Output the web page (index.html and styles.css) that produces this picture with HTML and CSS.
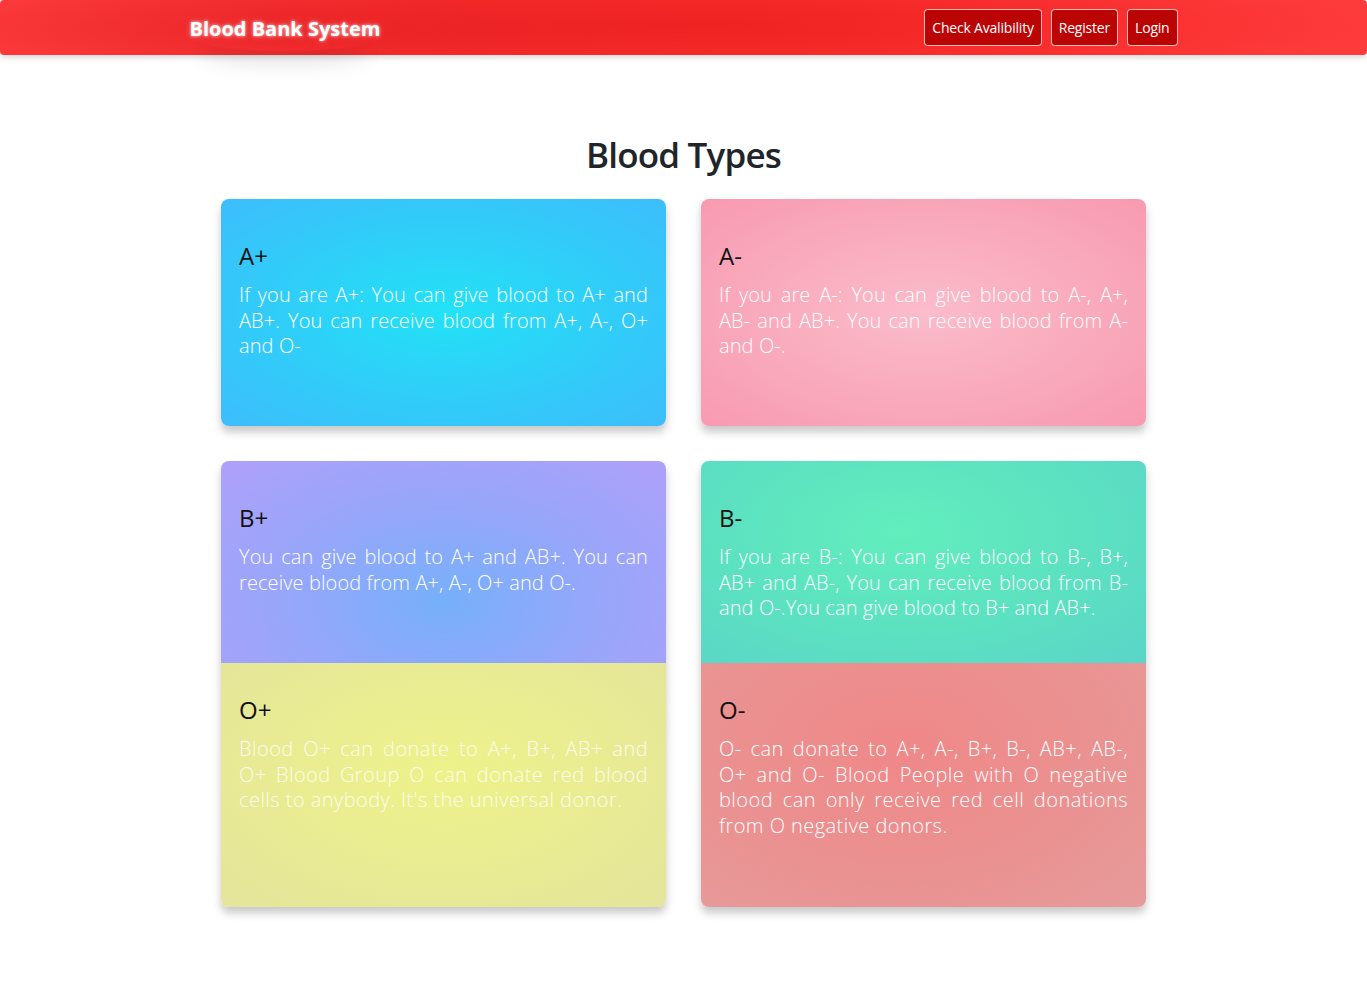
FILE: index.html
```html
<!DOCTYPE html>
<html lang="en">
<head>
<meta charset="utf-8">
<title>Blood Bank System</title>
<link rel="stylesheet" href="styles.css">
</head>
<body>
<nav class="navbar">
  <div class="nav-inner">
    <a class="brand" href="#">Blood Bank System</a>
    <div class="nav-actions">
      <a class="btn" href="#">Check Avalibility</a>
      <a class="btn" href="#">Register</a>
      <a class="btn" href="#">Login</a>
    </div>
  </div>
</nav>

<main class="content">
  <h1 class="page-title">Blood Types</h1>
  <div class="grid">
    <div class="card card-apos row1 rounded">
      <h3 class="type">A+</h3>
      <p class="desc">If you are A+: You can give blood to A+ and AB+. You can receive blood from A+, A-, O+ and O-</p>
    </div>
    <div class="card card-aneg row1 rounded">
      <h3 class="type">A-</h3>
      <p class="desc">If you are A-: You can give blood to A-, A+, AB- and AB+. You can receive blood from A- and O-.</p>
    </div>
    <div class="stack">
      <div class="card card-bpos row2 top">
        <h3 class="type">B+</h3>
        <p class="desc">You can give blood to A+ and AB+. You can receive blood from A+, A-, O+ and O-.</p>
      </div>
      <div class="card card-opos row3 bottom">
        <h3 class="type">O+</h3>
        <p class="desc faint">Blood O+ can donate to A+, B+, AB+ and O+ Blood Group O can donate red blood cells to anybody. It's the universal donor.</p>
      </div>
    </div>
    <div class="stack">
      <div class="card card-bneg row2 top">
        <h3 class="type">B-</h3>
        <p class="desc">If you are B-: You can give blood to B-, B+, AB+ and AB-, You can receive blood from B- and O-.You can give blood to B+ and AB+.</p>
      </div>
      <div class="card card-oneg row3 bottom">
        <h3 class="type">O-</h3>
        <p class="desc">O- can donate to A+, A-, B+, B-, AB+, AB-, O+ and O- Blood People with O negative blood can only receive red cell donations from O negative donors.</p>
      </div>
    </div>
  </div>
</main>
</body>
</html>
```

FILE: styles.css
```css
* { box-sizing: border-box; }

html, body {
  margin: 0;
  padding: 0;
  background: #ffffff;
  font-family: "Open Sans", "Noto Sans", "Liberation Sans", sans-serif;
  color: #212529;
}

.navbar {
  height: 55px;
  border-radius: 4px;
  background:
    radial-gradient(ellipse 420px 60px at 290px 30px, rgba(200, 20, 30, 0.3), rgba(200, 20, 30, 0) 100%),
    radial-gradient(ellipse 700px 70px at 680px 25px, #ef2222 0%, #f72a2a 45%, #fe3b3b 100%);
  box-shadow: 0 2px 6px rgba(0, 0, 0, 0.18);
  position: relative;
}

.nav-inner {
  width: 1000px;
  margin: 0 auto;
  height: 100%;
  display: flex;
  align-items: center;
  justify-content: space-between;
  padding: 0 6px 0 6px;
}

.brand {
  position: relative;
  font-weight: 700;
  font-size: 20px;
  color: #ffffff;
  text-decoration: none;
  letter-spacing: 0;
  text-shadow: 0 0 3px rgba(255, 255, 255, 0.7), 0 0 6px rgba(255, 255, 255, 0.35);
  margin-top: 1px;
}

.brand::after {
  content: "";
  position: absolute;
  left: 10px;
  right: 10px;
  top: 14px;
  height: 22px;
  border-radius: 50%;
  box-shadow: 0 16px 18px rgba(0, 0, 0, 0.08);
  pointer-events: none;
}

.nav-actions {
  display: flex;
  gap: 9px;
  align-items: center;
}

.btn {
  display: inline-flex;
  align-items: center;
  height: 37px;
  padding: 0 7px;
  background: #bb0505;
  color: #ffffff;
  font-size: 14px;
  text-decoration: none;
  border: 1px solid rgba(255, 220, 220, 0.85);
  border-radius: 4px;
  letter-spacing: -0.2px;
}

.content {
  width: 925px;
  margin: 0 auto;
  padding-top: 77px;
  padding-bottom: 60px;
}

.page-title {
  margin: 0 0 21px;
  text-align: center;
  font-size: 35px;
  font-weight: 600;
  line-height: 46px;
  color: #212529;
  letter-spacing: -0.8px;
}

.grid {
  display: grid;
  grid-template-columns: 445px 445px;
  column-gap: 35px;
  row-gap: 35px;
}

.stack {
  display: flex;
  flex-direction: column;
  border-radius: 8px;
  box-shadow: 0 6px 8px rgba(0, 0, 0, 0.22);
}

.card {
  padding: 42px 18px 0;
}

.rounded {
  border-radius: 8px;
  box-shadow: 0 6px 8px rgba(0, 0, 0, 0.22);
}

.top { border-radius: 8px 8px 0 0; }
.bottom { border-radius: 0 0 8px 8px; }

.row1 { height: 227px; }
.row2 { height: 202px; }
.row3 { height: 244px; padding-top: 32px; }

.type {
  margin: 0 0 11px;
  font-size: 24px;
  font-weight: 400;
  line-height: 30px;
  color: #111111;
}

.desc {
  margin: 0;
  font-size: 20px;
  font-weight: 300;
  line-height: 25.6px;
  color: #ffffff;
  text-align: justify;
  letter-spacing: 0.1px;
}

.row3 .desc { letter-spacing: 0.45px; }

.desc.faint { color: rgba(255, 255, 255, 0.85); }

.card-apos {
  background: radial-gradient(ellipse at 50% 50%, #22e2f6 0%, #2ed0f8 45%, #3dbdfc 100%);
}
.card-aneg {
  background: radial-gradient(ellipse at 50% 50%, #fbbccb 0%, #f9abbd 50%, #f89ab1 100%);
}
.card-bpos {
  background: radial-gradient(ellipse at 50% 70%, #76b0fa 0%, #97a6fa 50%, #afa0fa 100%);
}
.card-bneg {
  background: radial-gradient(ellipse at 45% 35%, #62eebd 0%, #5ce2c0 50%, #5ad5c8 100%);
}
.card-opos {
  background: radial-gradient(ellipse at 50% 45%, #eef28a 0%, #e9ec92 50%, #e5e49c 100%);
}
.card-oneg {
  background: radial-gradient(ellipse at 45% 35%, #f08888 0%, #eb9090 50%, #e69b9b 100%);
}
```
